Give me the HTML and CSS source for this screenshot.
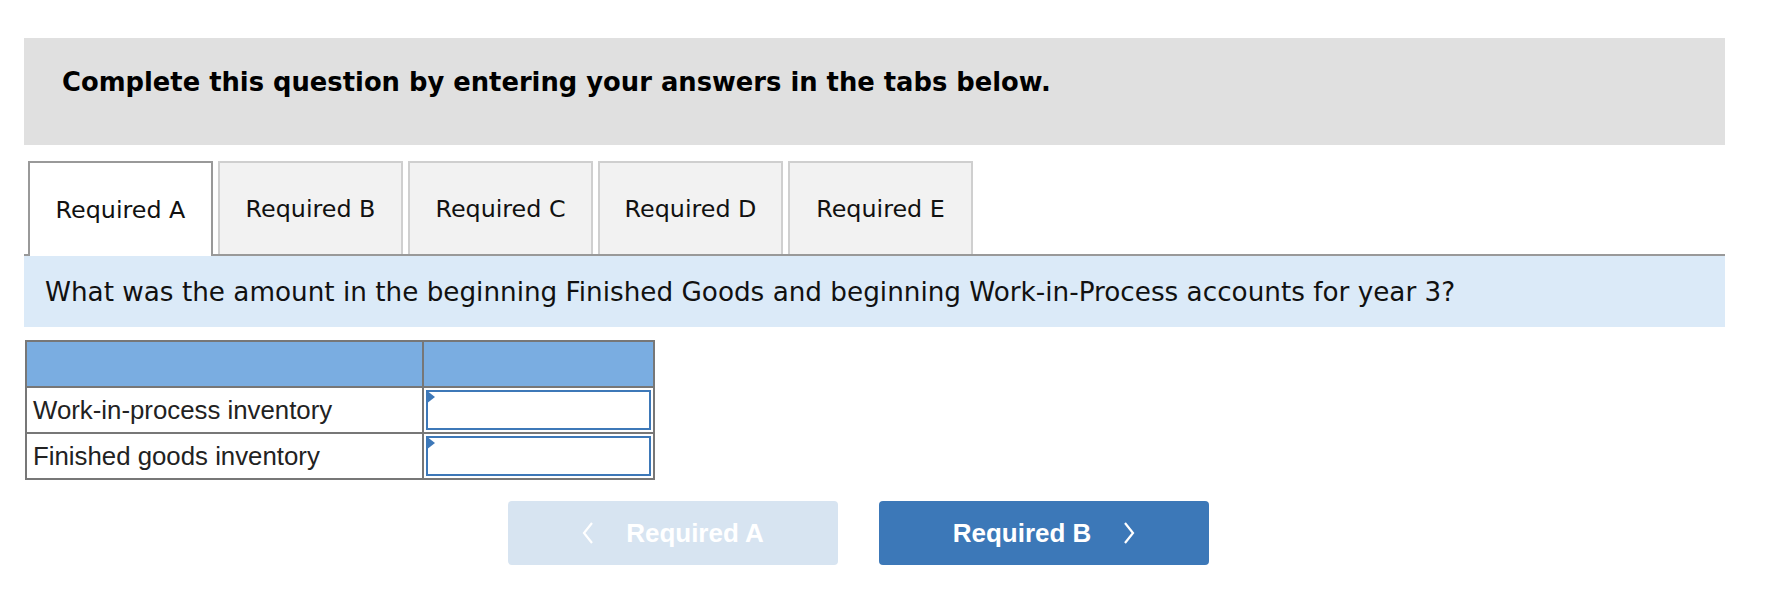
FILE: index.html
```html
<!DOCTYPE html>
<html>
<head>
<meta charset="utf-8">
<link rel="stylesheet" href="styles.css">
</head>
<body>
<div class="wrap">
  <div class="banner">Complete this question by entering your answers in the tabs below.</div>
  <div class="tabs">
    <div class="tab active">Required A</div>
    <div class="tab">Required B</div>
    <div class="tab">Required C</div>
    <div class="tab">Required D</div>
    <div class="tab">Required E</div>
  </div>
  <div class="question">What was the amount in the beginning Finished Goods and beginning Work-in-Process accounts for year 3?</div>
  <table class="grid">
    <tr class="head"><td class="c1"></td><td class="c2"></td></tr>
    <tr><td class="c1 label">Work-in-process inventory</td><td class="c2 inp"><div class="box"><span class="tri"></span></div></td></tr>
    <tr><td class="c1 label">Finished goods inventory</td><td class="c2 inp"><div class="box"><span class="tri"></span></div></td></tr>
  </table>
  <div class="nav">
    <div class="btn prev">
      <svg class="chev" width="12" height="22" viewBox="0 0 12 22"><polyline points="10,1 2,11 10,21" fill="none" stroke="#fff" stroke-width="2.2"/></svg>
      <span>Required A</span>
    </div>
    <div class="btn next">
      <span>Required B</span>
      <svg class="chev" width="12" height="22" viewBox="0 0 12 22"><polyline points="2,1 10,11 2,21" fill="none" stroke="#fff" stroke-width="2.2"/></svg>
    </div>
  </div>
</div>
</body>
</html>
```
FILE: styles.css
```css
html, body { margin: 0; padding: 0; background: #fff; }
.wrap { margin-left: 24px; width: 1701px; padding-top: 38px; }
.banner {
  background: #e0e0e0;
  height: 107px;
  box-sizing: border-box;
  padding: 28px 0 0 38px;
  font-family: "DejaVu Sans", Verdana, sans-serif;
  font-weight: bold;
  font-size: 25.8px;
  line-height: 32px;
  color: #000;
}
.tabs {
  display: flex;
  gap: 5px;
  margin-top: 16px;
  padding-left: 4px;
  border-bottom: 2px solid #999;
  height: 93px;
}
.tab {
  width: 185px;
  box-sizing: border-box;
  height: 93px;
  background: #f2f2f2;
  border: 2px solid #cfcfcf;
  border-bottom: none;
  display: flex;
  align-items: center;
  justify-content: center;
  font-family: "DejaVu Sans", Verdana, sans-serif;
  font-size: 23.8px;
  color: #111;
}
.tab.active {
  background: #fff;
  border-color: #999;
  height: 95px;
}
.question {
  background: #dbeaf8;
  height: 71px;
  box-sizing: border-box;
  padding: 19px 0 0 21px;
  font-family: "DejaVu Sans", Verdana, sans-serif;
  font-size: 26.25px;
  line-height: 34px;
  color: #111;
}
.grid {
  margin-top: 13px;
  margin-left: 1px;
  border-collapse: collapse;
  border: 2px solid #777;
}
.grid td { border: 2px solid #777; padding: 0; height: 44px; }
.grid .c1 { width: 389px; }
.grid .c2 { width: 229px; }
.grid .head td { background: #7aade1; }
.label {
  font-family: "Liberation Sans", Arial, sans-serif;
  font-size: 25.8px;
  color: #222;
  padding-left: 6px !important;
  white-space: nowrap;
}
.box {
  position: relative;
  margin: 2px;
  height: 40px;
  border: 2px solid #3d78b8;
  box-sizing: border-box;
}
.tri {
  position: absolute;
  left: -2px; top: -2px;
  width: 0; height: 0;
  border-top: 7px solid transparent;
  border-bottom: 7px solid transparent;
  border-left: 9px solid #3d78b8;
}
.nav {
  display: flex;
  gap: 41px;
  margin-top: 21px;
  padding-left: 484px;
}
.btn {
  width: 330px;
  height: 64px;
  border-radius: 4px;
  display: flex;
  align-items: center;
  justify-content: center;
  gap: 32px;
  font-family: "Liberation Sans", Arial, sans-serif;
  font-weight: bold;
  font-size: 26px;
  color: #fff;
}
.prev { background: #d7e4f1; }
.next { background: #3c78b8; }
.chev { display: block; }
```
